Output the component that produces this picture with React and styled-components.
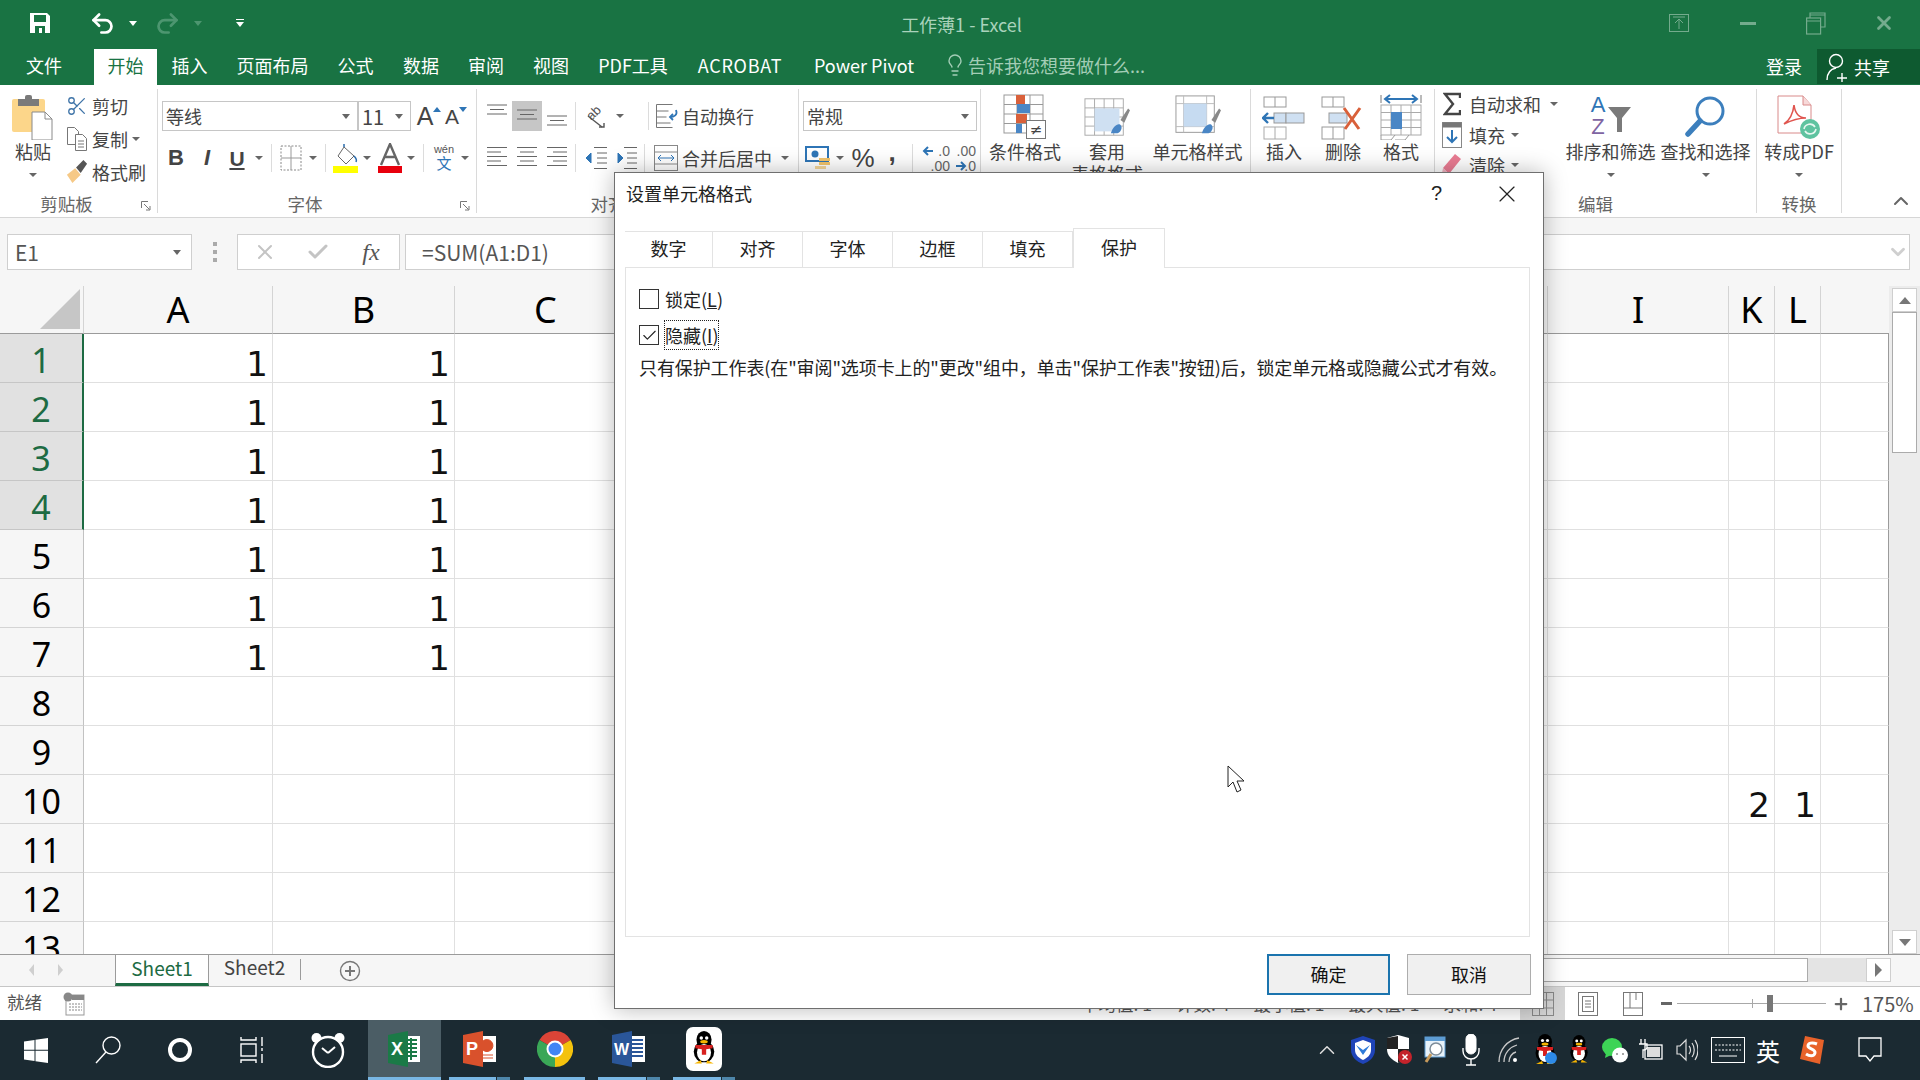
import React from "react";
import styled, { createGlobalStyle } from "styled-components";
import { Undo2, Redo2, Scissors, Lightbulb, ChevronUp, ChevronDown, Plus, X, Check } from "lucide-react";

const FONT = `"Noto Sans CJK SC", "Noto Sans", sans-serif`;

const GlobalStyle = createGlobalStyle`
  html, body { margin: 0; padding: 0; background: #fff; overflow: hidden; }
  * { box-sizing: border-box; }
  body { font-family: ${FONT}; font-size: 18px; color: #444; }
`;

const Page = styled.div`
  position: relative;
  width: 1920px;
  height: 1080px;
  display: flex;
  flex-direction: column;
  overflow: hidden;
`;

/* ---- title bar ---- */
const TitleBar = styled.div`
  height: 49px;
  background: #197343;
  display: flex;
  align-items: center;
  color: #fff;
`;
const QatSlot = styled.div`
  width: ${(p) => p.$w}px;
  height: 49px;
  display: flex;
  align-items: center;
  justify-content: center;
  padding-bottom: 3px;
`;
const TitleText = styled.div`
  flex: 1;
  text-align: center;
  color: #a9d2bb;
  font-size: 18px;
  padding-left: 3px;
  padding-bottom: 2px;
`;
const TinyCaret = styled.span`
  width: 0;
  height: 0;
  border-left: 4px solid transparent;
  border-right: 4px solid transparent;
  ${(p) =>
    p.$up
      ? `border-bottom: 5px solid ${p.$c || "#666"};`
      : `border-top: 5px solid ${p.$c || "#666"};`}
  margin-bottom: ${(p) => p.$raise || 0}px;
  display: inline-block;
`;
const QatMore = styled.div`
  display: flex;
  flex-direction: column;
  align-items: center;
  gap: 2px;
  i { width: 8px; height: 1.5px; background: #fff; display: block; }
`;

/* ---- tabs ---- */
const TabRow = styled.div`
  height: 36px;
  background: #197343;
  display: flex;
  align-items: stretch;
`;
const MenuTab = styled.div`
  width: ${(p) => p.$w}px;
  display: flex;
  align-items: center;
  justify-content: center;
  font-size: 18px;
  padding-bottom: 5px;
  padding-right: ${(p) => p.$pr || 0}px;
  letter-spacing: ${(p) => p.$ls || 0}px;
  color: ${(p) => (p.$active ? "#197343" : "#fff")};
  background: ${(p) => (p.$active ? "#fff" : "transparent")};
`;
const Hint = styled.div`
  margin-left: 13px;
  display: flex;
  align-items: center;
  gap: 1px;
  color: #a3cdb6;
  font-size: 18px;
  padding-bottom: 5px;
`;
const Login = styled.div`
  margin-left: auto;
  width: 51px;
  color: #fff;
  display: flex;
  align-items: center;
  padding-bottom: 3px;
`;
const ShareBtn = styled.div`
  width: 103px;
  height: 35px;
  background: #0e5a30;
  color: #fff;
  display: flex;
  align-items: center;
  gap: 6px;
  padding-left: 9px;
`;

/* ---- ribbon ---- */
const Ribbon = styled.div`
  height: 133px;
  background: #fff;
  border-bottom: 1px solid #d6d6d6;
  padding: 4px 0 4px;
  display: flex;
`;
const Group = styled.div`
  width: ${(p) => p.$w}px;
  border-right: 1px solid #dadada;
  display: flex;
  flex-direction: column;
  position: relative;
`;
const GroupBody = styled.div`
  flex: 1;
  display: flex;
  min-height: 0;
`;
const GroupLabel = styled.div`
  height: 19px;
  line-height: 19px;
  text-align: center;
  font-size: 17.5px;
  color: #666;
  padding-right: ${(p) => (p.$launcher ? 24 : 0)}px;
`;
const Launcher = styled.svg`
  position: absolute;
  right: 6px;
  bottom: 2px;
`;
const CollapseCell = styled.div`
  flex: 1;
  display: flex;
  justify-content: flex-end;
  align-items: flex-end;
  padding-right: 7px;
`;
const BigBtn = styled.div`
  width: ${(p) => p.$w}px;
  margin-left: ${(p) => p.$ml || 0}px;
  padding-top: 5px;
  display: flex;
  flex-direction: column;
  align-items: center;
  flex-shrink: 0;
`;
const BigIcon = styled.div`
  height: 45px;
  display: flex;
  align-items: flex-start;
  justify-content: center;
`;
const BigLabel = styled.div`
  height: 20px;
  line-height: 20px;
  margin-top: 2px;
  font-size: 18px;
  color: #444;
  white-space: nowrap;
`;
const Caret = styled.span`
  width: 0;
  height: 0;
  border-left: 4px solid transparent;
  border-right: 4px solid transparent;
  border-top: 4.5px solid #666;
  flex-shrink: 0;
  margin-top: ${(p) => p.$mt || 0}px;
`;
const ClipCol = styled.div`
  width: ${(p) => (p.$w ? p.$w + "px" : "auto")};
  padding-left: ${(p) => p.$pl || 0}px;
  display: flex;
  flex-direction: column;
  flex-shrink: 0;
`;
const SmallRow = styled.div`
  height: ${(p) => p.$h || 33}px;
  display: flex;
  align-items: center;
  gap: ${(p) => p.$gap || 4}px;
  color: #444;
  font-size: 18px;
  white-space: nowrap;
`;
const FormRows = styled.div`
  padding: 12px 0 0 ${(p) => p.$pl || 0}px;
  display: flex;
  flex-direction: column;
  gap: 12px;
`;
const FormRow = styled.div`
  height: 30px;
  display: flex;
  align-items: center;
`;
const Combo = styled.div`
  width: ${(p) => p.$w}px;
  height: 30px;
  border: 1px solid #c6c6c6;
  background: #fff;
  display: flex;
  align-items: center;
  justify-content: space-between;
  padding: 0 7px 0 3px;
  font-size: 18px;
  color: #444;
  margin-right: ${(p) => p.$mr || 0}px;
`;
const Cell = styled.div`
  width: ${(p) => p.$w}px;
  height: 30px;
  flex-shrink: 0;
  display: flex;
  align-items: center;
  justify-content: center;
  background: ${(p) => (p.$on ? "#c6c6c6" : "transparent")};
  color: #444;
`;
const Sep = styled.div`
  width: 1px;
  height: 28px;
  background: #dcdcdc;
`;
const FontGlyph = styled.span`
  font-family: "Liberation Sans", sans-serif;
  font-size: ${(p) => p.$s || 20}px;
  font-weight: ${(p) => (p.$b ? 700 : 400)};
  font-style: ${(p) => (p.$i ? "italic" : "normal")};
  text-decoration: ${(p) => (p.$u ? "underline" : "none")};
  padding-bottom: ${(p) => p.$pb || 0}px;
  color: #444;
  line-height: 1;
`;
const InlineText = styled.span`
  font-size: 18px;
  color: #444;
  white-space: nowrap;
`;
const SizeValue = styled.span`
  font-size: 20px;
`;

/* ---- formula bar ---- */
const FormulaBar = styled.div`
  height: 68px;
  background: #f6f6f6;
  padding: 16px 10px 16px 7px;
  display: flex;
`;
const NameBox = styled.div`
  width: 185px;
  border: 1px solid #cfcfcf;
  background: #fff;
  display: flex;
  align-items: center;
  justify-content: space-between;
  padding: 0 10px 0 7px;
  font-size: 21px;
  color: #555;
`;
const Dots = styled.div`
  width: 45px;
  display: flex;
  flex-direction: column;
  align-items: center;
  justify-content: center;
  gap: 4px;
  i { width: 4px; height: 4px; background: #aaa; display: block; }
`;
const FxBox = styled.div`
  width: 163px;
  border: 1px solid #cfcfcf;
  background: #fff;
  display: flex;
  align-items: center;
  padding-left: 15px;
  margin-right: 5px;
`;
const FxSlot = styled.div`
  width: ${(p) => p.$w}px;
  display: flex;
  justify-content: center;
  align-items: center;
  font-family: "Liberation Serif", serif;
  font-style: italic;
  font-size: 24px;
  color: #555;
`;
const FormulaInput = styled.div`
  flex: 1;
  border: 1px solid #cfcfcf;
  background: #fff;
  padding: 0 0 0 16px;
  display: flex;
  align-items: center;
  justify-content: space-between;
  font-size: 21px;
  color: #555;
`;

/* ---- sheet ---- */
const SheetArea = styled.div`
  height: 668px;
  display: flex;
  background: #f6f6f6;
`;
const COLS = [
  ["A", 189], ["B", 182], ["C", 182], ["D", 182], ["E", 182], ["F", 182], ["G", 182], ["H", 183],
  ["I", 181], ["K", 46], ["L", 46], ["", 68],
];
const SheetGrid = styled.div`
  width: 1889px;
  height: 668px;
  overflow: hidden;
  flex-shrink: 0;
  display: grid;
  grid-template-columns: 84px ${COLS.map((c) => c[1] + "px").join(" ")};
  grid-template-rows: 48px;
  grid-auto-rows: 49px;
`;
const Corner = styled.div`
  background: #f6f6f6;
  border-bottom: 1px solid #9b9b9b;
  border-right: 1px solid #d4d4d4;
  display: flex;
  justify-content: flex-end;
  align-items: flex-end;
  padding: 0 3px 4px 0;
  i {
    width: 40px;
    height: 40px;
    background: #c6c6c6;
    clip-path: polygon(100% 0, 100% 100%, 0 100%);
    display: block;
  }
`;
const ColHead = styled.div`
  position: relative;
  background: #f6f6f6;
  border-bottom: 1px solid #9b9b9b;
  border-right: ${(p) => (p.$last ? "none" : "1px solid #d4d4d4")};
  display: flex;
  align-items: center;
  justify-content: center;
  font-family: "Noto Sans", sans-serif;
  font-size: 36px;
  color: #000;
  line-height: 1;
  ${(p) =>
    p.$hiddenNext &&
    `&::after { content: ""; position: absolute; right: -5px; top: 0; bottom: 0; width: 1px; background: #d4d4d4; }`}
`;
const RowHead = styled.div`
  background: ${(p) => (p.$sel ? "#e1e1e1" : "#f6f6f6")};
  border-bottom: 1px solid ${(p) => (p.$sel ? "#c6c6c6" : "#d4d4d4")};
  border-right: ${(p) => (p.$sel ? "2px solid #1d6b43" : "1px solid #c2c2c2")};
  color: ${(p) => (p.$sel ? "#1d6b43" : "#000")};
  display: flex;
  align-items: center;
  justify-content: center;
  font-family: "Noto Sans", sans-serif;
  font-size: 34px;
  line-height: 1;
  padding-top: 4px;
`;
const DataCell = styled.div`
  background: #fff;
  border-bottom: 1px solid #e0e0e0;
  border-right: 1px solid ${(p) => (p.$edge ? "#9b9b9b" : "#e0e0e0")};
  display: flex;
  align-items: center;
  justify-content: flex-end;
  padding: 11px 4px 0 0;
  font-family: "DejaVu Sans", sans-serif;
  font-size: 34px;
  line-height: 1;
  color: #111;
`;
const VScroll = styled.div`
  flex: 1;
  display: flex;
  flex-direction: column;
  padding: 2px 3px 0 3px;
  background: #ececec;
`;
const ScrollBtn = styled.div`
  width: 25px;
  height: ${(p) => p.$h || 24}px;
  background: #fff;
  border: 1px solid #cfcfcf;
  display: flex;
  align-items: center;
  justify-content: center;
  flex-shrink: 0;
`;
const VThumb = styled.div`
  width: 25px;
  height: 141px;
  background: #fff;
  border: 1px solid #ababab;
`;
const Tri = styled.span`
  width: 0;
  height: 0;
  border-left: 6px solid transparent;
  border-right: 6px solid transparent;
  ${(p) => (p.$up ? "border-bottom: 7px solid #777;" : "border-top: 7px solid #777;")}
`;
const VSpacer = styled.div`
  flex: 1;
`;

/* ---- sheet tabs ---- */
const SheetTabs = styled.div`
  height: 33px;
  background: #f6f6f6;
  border-top: 1px solid #9b9b9b;
  border-bottom: 1px solid #c6c6c6;
  display: flex;
  align-items: stretch;
`;
const NavArrows = styled.div`
  width: 115px;
  display: flex;
  align-items: center;
  padding: 0 0 2px 29px;
  gap: 24px;
`;
const NavTri = styled.span`
  width: 0;
  height: 0;
  border-top: 6px solid transparent;
  border-bottom: 6px solid transparent;
  ${(p) => (p.$left ? "border-right: 5px solid #cfcfcf;" : "border-left: 5px solid #cfcfcf;")}
`;
const SheetTab = styled.div`
  width: ${(p) => p.$w}px;
  display: flex;
  align-items: center;
  justify-content: center;
  font-size: 19px;
  margin-top: -1px;
  padding-bottom: ${(p) => (p.$active ? 4 : 7)}px;
  color: ${(p) => (p.$active ? "#1d6b43" : "#444")};
  background: ${(p) => (p.$active ? "#fff" : "transparent")};
  border-bottom: ${(p) => (p.$active ? "3px solid #1d6b43" : "none")};
  border-top: ${(p) => (p.$active ? "1px solid #9b9b9b" : "none")};
  border-left: ${(p) => (p.$active ? "1px solid #9b9b9b" : "none")};
  border-right: ${(p) => (p.$active ? "1px solid #9b9b9b" : "none")};
`;
const TabDivider = styled.div`
  width: 1px;
  margin: 4px 0 6px;
  background: #9b9b9b;
`;
const AddSheet = styled.div`
  margin-left: 38px;
  display: flex;
  align-items: center;
`;
const HScroll = styled.div`
  margin: 3px 29px 4px auto;
  width: 651px;
  display: flex;
  background: #e4e4e4;
`;
const HThumb = styled.div`
  width: 568px;
  background: #fff;
  border: 1px solid #ababab;
`;
const HTrack = styled.div`
  flex: 1;
`;
const HBtn = styled.div`
  width: 25px;
  background: #fff;
  border: 1px solid #cfcfcf;
  display: flex;
  align-items: center;
  justify-content: center;
  i {
    width: 0;
    height: 0;
    border-top: 7px solid transparent;
    border-bottom: 7px solid transparent;
    border-left: 7px solid #777;
  }
`;

/* ---- status bar ---- */
const StatusBar = styled.div`
  height: 33px;
  background: #fff;
  display: flex;
  align-items: stretch;
  color: #555;
  font-size: 17.5px;
`;
const StatusText = styled.div`
  padding: 0 0 4px 7px;
  width: 63px;
  display: flex;
  align-items: center;
`;
const StatusCell = styled.div`
  display: flex;
  align-items: center;
`;
const Summary = styled.div`
  margin: 0 23px 0 auto;
  display: flex;
  align-items: center;
  gap: 24px;
  white-space: nowrap;
`;
const ViewBtn = styled.div`
  width: 45px;
  display: flex;
  align-items: center;
  justify-content: center;
  background: ${(p) => (p.$on ? "#d6d6d6" : "transparent")};
`;
const ZoomBar = styled.div`
  width: 265px;
  display: flex;
  align-items: center;
  padding-left: 6px;
`;
const Slider = styled.div`
  position: relative;
  width: 149px;
  height: 1px;
  background: #a8a8a8;
  margin: 0 6px 0 5px;
  &::before {
    content: "";
    position: absolute;
    left: 75px;
    top: -4px;
    width: 1px;
    height: 9px;
    background: #a8a8a8;
  }
  &::after {
    content: "";
    position: absolute;
    left: 90px;
    top: -8px;
    width: 6px;
    height: 17px;
    background: #777;
  }
`;
const ZoomPct = styled.div`
  margin-left: 12px;
  font-size: 20px;
  color: #555;
`;

/* ---- taskbar ---- */
const Taskbar = styled.div`
  height: 60px;
  background: #1b2a32;
  display: flex;
`;
const TaskSlot = styled.div`
  width: ${(p) => p.$w}px;
  margin-left: ${(p) => p.$ml || 0}px;
  background: ${(p) => (p.$active ? "#4b5d65" : "transparent")};
  display: flex;
  flex-direction: column;
  flex-shrink: 0;
`;
const TaskIcon = styled.div`
  flex: 1;
  display: flex;
  align-items: center;
  justify-content: center;
  color: #fff;
  font-size: 24px;
`;
const Indicator = styled.div`
  height: 3px;
  display: flex;
  gap: 1px;
  i { background: #79b7e4; flex: 1; display: block; }
  i + i { flex: 0 0 13px; background: #4e86aa; }
`;
const Tray = styled.div`
  margin-left: auto;
  display: flex;
  padding-right: 19px;
`;

/* ---- dialog ---- */
const Dialog = styled.div`
  position: absolute;
  left: 614px;
  top: 172px;
  width: 930px;
  height: 837px;
  background: #fff;
  border: 1px solid #6f6f6f;
  box-shadow: 0 0 22px rgba(0, 0, 0, 0.28);
  display: flex;
  flex-direction: column;
  color: #222;
`;
const DialogHead = styled.div`
  height: 55px;
  display: flex;
  align-items: flex-start;
  padding: 7px 22px 0 11px;
  font-size: 18px;
`;
const DialogTitle = styled.div`
  flex: 1;
`;
const HelpMark = styled.div`
  width: 20px;
  margin: 2px 42px 0 0;
  font-family: "Liberation Sans", sans-serif;
  font-size: 20px;
`;
const DlgTabs = styled.div`
  height: 39px;
  padding-left: 10px;
  display: flex;
  align-items: flex-end;
  position: relative;
  z-index: 1;
`;
const DlgTab = styled.div`
  width: ${(p) => p.$w}px;
  height: ${(p) => (p.$active ? 40 : 36)}px;
  background: #fff;
  margin-bottom: ${(p) => (p.$active ? -1 : 0)}px;
  padding-bottom: 3px;
  border-top: 1px solid #e3e3e3;
  border-right: 1px solid #e3e3e3;
  border-left: ${(p) => (p.$active ? "1px solid #e3e3e3" : "none")};
  display: flex;
  align-items: center;
  justify-content: center;
  font-size: 18px;
  color: #222;
`;
const DlgPanel = styled.div`
  height: 670px;
  margin: 0 13px 0 10px;
  border: 1px solid #e3e3e3;
  padding: 21px 13px;
  display: flex;
  flex-direction: column;
`;
const CheckRow = styled.div`
  height: 20px;
  margin-bottom: 16px;
  display: flex;
  align-items: center;
  gap: 5px;
  font-size: 18px;
  color: #222;
`;
const CheckBox = styled.span`
  width: 20px;
  height: 20px;
  border: 1px solid #333;
  display: flex;
  align-items: center;
  justify-content: center;
  flex-shrink: 0;
`;
const CheckLabel = styled.span`
  padding: 2px 0;
  border: 1px dotted ${(p) => (p.$focus ? "#222" : "transparent")};
  line-height: 24px;
`;
const Desc = styled.div`
  font-size: 18px;
  line-height: 24px;
  letter-spacing: -0.1px;
  white-space: nowrap;
  color: #222;
  margin-top: -6px;
`;
const DlgFooter = styled.div`
  padding: 17px 12px 0 0;
  display: flex;
  justify-content: flex-end;
  gap: 17px;
`;
const DlgButton = styled.div`
  width: ${(p) => (p.$primary ? 123 : 124)}px;
  height: 41px;
  background: #f0f0f0;
  border: ${(p) => (p.$primary ? "2px solid #1b74ae" : "1px solid #adadad")};
  display: flex;
  align-items: center;
  justify-content: center;
  font-size: 18px;
  color: #111;
  padding-bottom: 2px;
`;
const Cursor = styled.svg`
  position: absolute;
  left: 1227px;
  top: 765px;
`;

/* ---- icons ---- */
const SaveIcon = () => (
  <svg width="20" height="20" viewBox="0 0 20 20">
    <path d="M0 0h17l3 3v17H0z" fill="#fff" />
    <rect x="4" y="2" width="12" height="7" fill="#197343" />
    <rect x="5" y="13" width="10" height="7" fill="#197343" />
    <rect x="9" y="15" width="3" height="5" fill="#fff" />
  </svg>
);
const PasteIcon = () => (
  <svg width="42" height="46" viewBox="0 0 42 46">
    <rect x="0" y="5" width="33" height="33" rx="2" fill="#fcd68a" />
    <rect x="6" y="5" width="21" height="7" fill="#7a7a7a" />
    <rect x="13" y="1" width="7" height="7" rx="2" fill="#7a7a7a" />
    <path d="M20 18h13l7 7v21H20z" fill="#fff" stroke="#8a8a8a" />
    <path d="M33 18v7h7" fill="none" stroke="#8a8a8a" />
  </svg>
);
const CopyIcon = () => (
  <svg width="22" height="26" viewBox="0 0 22 26" fill="#fff" stroke="#777">
    <path d="M1.5 1.5h7l4 4v13h-11z" />
    <path d="M9.5 8.5h7l4 4v12h-11z" />
    <path d="M12 15h6M12 18h6M12 21h6" />
  </svg>
);
const BrushIcon = () => (
  <svg width="24" height="26" viewBox="0 0 24 26">
    <path d="M1 16l9-7 6 7-9 9z" fill="#f6c987" />
    <path d="M11 8l8-8 4 4-7 10z" fill="#555" />
  </svg>
);
const LaunchIcon = () => (
  <Launcher width="10" height="10" viewBox="0 0 10 10" fill="none" stroke="#777">
    <path d="M.5 7V.5H7" />
    <path d="M3 3l5.5 5.5M9 5v4H5" />
  </Launcher>
);
const BorderIcon = () => (
  <svg width="22" height="26" viewBox="0 0 22 26" fill="none" stroke="#888" strokeDasharray="2 1.5">
    <rect x="1" y="1" width="20" height="24" />
    <path d="M11 1v24M1 13h20" strokeDasharray="none" stroke="#999" />
  </svg>
);
const FillIcon = () => (
  <svg width="26" height="30" viewBox="0 0 26 30">
    <path d="M11 4l10 9-8 8-8-8z" fill="#fff" stroke="#666" />
    <path d="M11 4V1M21 13c2 2 3 4 2 6" fill="none" stroke="#2b6cad" strokeWidth="1.5" />
    <rect x="0" y="23" width="25" height="7" fill="#ffff00" />
  </svg>
);
const ColorAIcon = () => (
  <svg width="24" height="30" viewBox="0 0 24 30">
    <path d="M3 22L12 1l9 21M7 14h10" fill="none" stroke="#666" strokeWidth="2.4" />
    <rect x="0" y="23" width="24" height="7" fill="#e8000d" />
  </svg>
);
const WenIcon = () => (
  <svg width="26" height="30" viewBox="0 0 26 30">
    <text x="13" y="10" textAnchor="middle" fontSize="11" fill="#555" fontFamily="Liberation Sans">wén</text>
    <text x="13" y="26" textAnchor="middle" fontSize="15" fill="#2e75b6" fontFamily="Noto Sans CJK SC">文</text>
  </svg>
);
const AlignLines = ({ kind }) => {
  const ys = kind === "top" ? [4, 8.5, 13] : kind === "middle" ? [9, 13.5, 18] : [15, 19.5, 24];
  return (
    <svg width="22" height="30" viewBox="0 0 22 30" stroke="#666">
      {ys.map((y, i) => (
        <line key={y} x1={i === 1 ? 4 : 1} x2={i === 1 ? 18 : 21} y1={y} y2={y} />
      ))}
    </svg>
  );
};
const HAlign = ({ kind }) => (
  <svg width="22" height="24" viewBox="0 0 22 24" stroke="#666">
    {[1.5, 6, 10.5, 15, 19.5].map((y, i) => {
      const short = i % 2 === 1;
      const x1 = !short || kind === "left" ? 1 : kind === "center" ? 4 : 7;
      const x2 = !short || kind === "right" ? 21 : kind === "center" ? 18 : 15;
      return <line key={y} x1={x1} x2={x2} y1={y} y2={y} />;
    })}
  </svg>
);
const OrientIcon = () => (
  <svg width="24" height="26" viewBox="0 0 24 26" fill="none" stroke="#555" strokeWidth="1.4">
    <text x="3" y="15" fontSize="13" transform="rotate(-45 9 11)" fill="#555" stroke="none" fontFamily="Liberation Sans">ab</text>
    <path d="M4 13l14 11" stroke="#555" />
    <path d="M15 24h5v-4" stroke="#555" />
  </svg>
);
const IndentIcon = ({ out }) => (
  <svg width="23" height="24" viewBox="0 0 23 24" stroke="#666">
    <path d="M9 1.5h13M12 7h10M12 12h10M12 17h10M9 22.5h13" />
    <path d={out ? "M1 12l5-5v10z" : "M8 12l-5-5v10z"} fill="#2e75b6" stroke="#2e75b6" />
  </svg>
);
const WrapIcon = () => (
  <svg width="24" height="26" viewBox="0 0 24 26" fill="none" stroke="#777">
    <path d="M1.5 1.5h16M1.5 1.5v23h16M1.5 8h12M1.5 14h10M1.5 20h14" />
    <path d="M21 7c2 5-2 7-6 7" stroke="#2e75b6" strokeWidth="1.8" />
    <path d="M18 11l-3 3 3 3" stroke="#2e75b6" strokeWidth="1.8" />
  </svg>
);
const MergeIcon = () => (
  <svg width="24" height="26" viewBox="0 0 24 26" fill="none" stroke="#888">
    <rect x=".5" y=".5" width="23" height="25" />
    <path d="M.5 7h23M.5 19h23" />
    <path d="M4 13h16M7 10l-3 3 3 3M17 10l3 3-3 3" stroke="#2e75b6" />
  </svg>
);
const CurrencyIcon = () => (
  <svg width="26" height="24" viewBox="0 0 26 24">
    <rect x="1" y="1" width="22" height="14" fill="#fff" stroke="#2e75b6" strokeWidth="2" />
    <circle cx="10" cy="8" r="3.5" fill="#2e75b6" />
    <rect x="14" y="12" width="11" height="3" fill="#f2c46b" />
    <rect x="14" y="16" width="11" height="3" fill="#f2c46b" />
    <rect x="10" y="20" width="11" height="3" fill="#f6d79a" />
  </svg>
);
const GridLines = ({ x, y, w, h, nx, ny, stroke = "#999" }) => (
  <g fill="none" stroke={stroke}>
    <rect x={x} y={y} width={w} height={h} fill="#fff" />
    {Array.from({ length: nx - 1 }, (_, i) => (
      <line key={"v" + i} x1={x + (w * (i + 1)) / nx} x2={x + (w * (i + 1)) / nx} y1={y} y2={y + h} />
    ))}
    {Array.from({ length: ny - 1 }, (_, i) => (
      <line key={"h" + i} x1={x} x2={x + w} y1={y + (h * (i + 1)) / ny} y2={y + (h * (i + 1)) / ny} />
    ))}
  </g>
);
const CondIcon = () => (
  <svg width="44" height="46" viewBox="0 0 44 46">
    <GridLines x={1} y={1} w={39} h={38} nx={3} ny={4} />
    <rect x="13" y="1" width="9" height="9" fill="#d9603a" />
    <rect x="14" y="10" width="13" height="9" fill="#4a86c5" />
    <rect x="13" y="20" width="11" height="9" fill="#d9603a" />
    <rect x="13" y="30" width="6" height="9" fill="#4a86c5" />
    <rect x="23.5" y="26.5" width="19" height="18" fill="#fff" stroke="#777" />
    <text x="33" y="41" textAnchor="middle" fontSize="15" fill="#444" fontFamily="DejaVu Sans">≠</text>
  </svg>
);
const StyleBrush = () => (
  <g>
    <path d="M28 40c2-7 7-11 10-9 3 3 0 8-3 9z" fill="#4a86c5" />
    <path d="M38 26l8-12 2 2-6 13z" fill="#888" />
  </g>
);
const TableStyleIcon = () => (
  <svg width="46" height="46" viewBox="0 0 48 46">
    <GridLines x={1} y={4} w={40} h={38} nx={4} ny={4} stroke="#aaa" />
    <rect x="11" y="14" width="26" height="24" fill="#cfe0f2" />
    <StyleBrush />
  </svg>
);
const CellStyleIcon = () => (
  <svg width="46" height="46" viewBox="0 0 48 46">
    <rect x="1" y="1" width="40" height="38" fill="#fff" stroke="#999" />
    <path d="M1 9h40M1 33h40M9 1v38M33 1v38" stroke="#bbb" />
    <rect x="9" y="9" width="24" height="24" fill="#c6dbf1" />
    <StyleBrush />
  </svg>
);
const InsertIcon = () => (
  <svg width="44" height="46" viewBox="0 0 44 46">
    <GridLines x={2} y={3} w={22} h={10} nx={2} ny={1} />
    <GridLines x={2} y={33} w={22} h={12} nx={2} ny={1} stroke="#aaa" />
    <rect x="12" y="19" width="12" height="10" fill="#cfe0f2" stroke="#999" />
    <rect x="24" y="19" width="18" height="10" fill="#cfe0f2" stroke="#999" />
    <path d="M12 24H1M6 19l-5 5 5 5" fill="none" stroke="#2e75b6" strokeWidth="2.4" />
  </svg>
);
const DeleteIcon = () => (
  <svg width="44" height="46" viewBox="0 0 44 46">
    <GridLines x={1} y={3} w={22} h={10} nx={2} ny={1} />
    <GridLines x={1} y={33} w={22} h={12} nx={2} ny={1} />
    <rect x="8" y="19" width="18" height="10" fill="#cfe0f2" stroke="#999" />
    <path d="M23 14l15 21M39 14L24 35" stroke="#d9603a" strokeWidth="3" />
  </svg>
);
const FormatIcon = () => (
  <svg width="42" height="46" viewBox="0 0 42 46">
    <path d="M1 1v8M41 1v8" stroke="#777" />
    <path d="M5 5h32M10 1L5 5l5 4M32 1l5 4-5 4" fill="none" stroke="#2e75b6" strokeWidth="2" />
    <GridLines x={1} y={11} w={40} h={30} nx={4} ny={4} stroke="#aaa" />
    <rect x="11" y="18" width="11" height="17" fill="#4a86c5" />
    <path d="M1 41v5h10l4-5M15 46h10l4-5" fill="none" stroke="#999" />
  </svg>
);
const SigmaIcon = () => (
  <svg width="18" height="24" viewBox="0 0 18 24" fill="none" stroke="#444" strokeWidth="2.4">
    <path d="M17 6V2H2l8 10-8 10h15v-4" />
  </svg>
);
const FillDownIcon = () => (
  <svg width="20" height="26" viewBox="0 0 20 26">
    <rect x=".5" y=".5" width="19" height="25" fill="#fff" stroke="#888" />
    <rect x=".5" y=".5" width="19" height="5" fill="#777" />
    <path d="M10 8v12M5 15l5 5 5-5" fill="none" stroke="#2e75b6" strokeWidth="2" />
  </svg>
);
const EraserIcon = () => (
  <svg width="20" height="24" viewBox="0 0 20 24">
    <path d="M1 15L13 1l6 5L7 21z" fill="#ea7c93" />
    <path d="M1 15l6 6-3 3-4-4z" fill="#f2b4c1" />
  </svg>
);
const SortIcon = () => (
  <svg width="44" height="46" viewBox="0 0 44 46">
    <text x="9" y="18" textAnchor="middle" fontSize="22" fill="#2e75b6" fontFamily="Liberation Sans">A</text>
    <text x="9" y="40" textAnchor="middle" fontSize="22" fill="#8064a2" fontFamily="Liberation Sans">Z</text>
    <path d="M19 13h23l-9 11v14h-5V24z" fill="#7a7a7a" />
  </svg>
);
const FindIcon = () => (
  <svg width="42" height="46" viewBox="0 0 42 46" fill="none" stroke="#3c7fbd">
    <circle cx="25" cy="17" r="13" strokeWidth="3" />
    <path d="M15 27L3 40" strokeWidth="5.5" strokeLinecap="round" />
  </svg>
);
const PdfIcon = () => (
  <svg width="44" height="46" viewBox="0 0 44 46">
    <path d="M1 2h25l8 9v28H1z" fill="#fff" stroke="#d98a8a" />
    <path d="M26 2v9h8" fill="#f7d9d9" stroke="#d98a8a" />
    <path d="M7 30c6-4 9-10 10-19 1 8 5 13 12 13-7 0-14 2-22 6z" fill="none" stroke="#e0554f" strokeWidth="1.6" />
    <circle cx="33" cy="35" r="10" fill="#5ec3a0" />
    <path d="M27 35a6 6 0 0 1 11-2M39 35a6 6 0 0 1-11 2" fill="none" stroke="#e7f7f0" strokeWidth="1.6" />
  </svg>
);
const UserIcon = () => (
  <svg width="22" height="30" viewBox="0 0 22 30" fill="none" stroke="#fff" strokeWidth="1.4">
    <circle cx="10" cy="9" r="6.5" />
    <path d="M1 28c0-7 4-11 9-12" />
    <path d="M16 21v9M11 26h10" />
  </svg>
);
const MacroIcon = () => (
  <svg width="22" height="24" viewBox="0 0 22 24">
    <rect x="3" y="3" width="18" height="20" fill="#fff" stroke="#999" />
    <rect x="9" y="3" width="12" height="5" fill="#888" />
    <circle cx="5" cy="5" r="4.5" fill="#888" />
    <path d="M6 12h13M6 15h13M6 18h13" stroke="#888" strokeDasharray="2 1" />
  </svg>
);
const NormalView = () => (
  <svg width="22" height="24" viewBox="0 0 22 24" fill="none" stroke="#888">
    <rect x=".5" y=".5" width="21" height="23" />
    <path d="M.5 8h21M.5 16h21M7.5.5v23M14.5.5v23" />
  </svg>
);
const PageView = () => (
  <svg width="20" height="24" viewBox="0 0 20 24" fill="none" stroke="#777">
    <rect x=".5" y=".5" width="19" height="23" />
    <rect x="4.5" y="4.5" width="11" height="15" />
    <path d="M7 9h6M7 12h6M7 15h6" />
  </svg>
);
const BreakView = () => (
  <svg width="20" height="24" viewBox="0 0 20 24" fill="none" stroke="#777">
    <rect x=".5" y=".5" width="19" height="23" />
    <path d="M.5 16h19M7 .5V16M13 .5V8" />
  </svg>
);

const WinLogo = () => (
  <svg width="24" height="25" viewBox="0 0 24 25" fill="#fff">
    <path d="M0 3.5L10.5 2v9.8H0zM11.5 1.8L24 0v11.8H11.5zM0 12.8h10.5V23L0 21.5zM11.5 12.8H24V25l-12.5-1.8z" />
  </svg>
);
const SearchIcon = () => (
  <svg width="26" height="28" viewBox="0 0 26 28" fill="none" stroke="#fff" strokeWidth="1.4">
    <circle cx="16.5" cy="9.5" r="8.5" />
    <path d="M11 16L1 27" />
  </svg>
);
const TaskViewIcon = () => (
  <svg width="24" height="26" viewBox="0 0 24 26" fill="none" stroke="#fff" strokeWidth="1.4">
    <rect x="1" y="7" width="15" height="12" />
    <path d="M1 0v3h15V0M1 26v-3h15v3M22 0v9M22 11v3M22 17v9" />
  </svg>
);
const ClockIcon = () => (
  <svg width="36" height="36" viewBox="0 0 36 36" fill="none">
    <circle cx="6.5" cy="6" r="5" fill="#fff" />
    <circle cx="29.5" cy="6" r="5" fill="#fff" />
    <circle cx="18" cy="20" r="15" fill="#1b2a32" stroke="#fff" strokeWidth="2.4" />
    <path d="M18 21l-6-5M18 21l7-6" stroke="#fff" strokeWidth="2" />
  </svg>
);
const ExcelIcon = () => (
  <svg width="34" height="36" viewBox="0 0 34 36">
    <rect x="14" y="5" width="18" height="26" fill="#fff" />
    <path d="M17 9h12M17 13h12M17 17h12M17 21h12M17 25h12M23 7v22" stroke="#1b7a47" strokeWidth="2" />
    <path d="M0 4l20-4v36L0 32z" fill="#1b7a47" />
    <text x="9" y="24" textAnchor="middle" fontSize="18" fontWeight="700" fill="#fff" fontFamily="Liberation Sans">X</text>
  </svg>
);
const PptIcon = () => (
  <svg width="34" height="36" viewBox="0 0 34 36">
    <rect x="14" y="5" width="19" height="26" fill="#fff" />
    <path d="M20 10a6 6 0 1 1-1 8zM18 24h12M18 27h12" fill="#d9512c" stroke="#d9512c" />
    <path d="M0 4l20-4v36L0 32z" fill="#d9512c" />
    <text x="9" y="24" textAnchor="middle" fontSize="18" fontWeight="700" fill="#fff" fontFamily="Liberation Sans">P</text>
  </svg>
);
const WordIcon = () => (
  <svg width="34" height="36" viewBox="0 0 34 36">
    <rect x="14" y="5" width="19" height="26" fill="#fff" />
    <path d="M18 9h13M18 13h13M18 17h13M18 21h13M18 25h13" stroke="#2a5699" strokeWidth="2" />
    <path d="M0 4l20-4v36L0 32z" fill="#2a5699" />
    <text x="9.5" y="24" textAnchor="middle" fontSize="16" fontWeight="700" fill="#fff" fontFamily="Liberation Sans">W</text>
  </svg>
);
const ChromeIcon = () => (
  <svg width="36" height="36" viewBox="0 0 36 36">
    <path d="M18 18L2.4 9A18 18 0 0 1 33.6 9z" fill="#db4437" />
    <path d="M18 18L33.6 9A18 18 0 0 1 18 36z" fill="#f4c20d" />
    <path d="M18 18L18 36A18 18 0 0 1 2.4 9z" fill="#3aa757" />
    <circle cx="18" cy="18" r="8.5" fill="#fff" />
    <circle cx="18" cy="18" r="6.5" fill="#4285f4" />
  </svg>
);
const Penguin = ({ s = 24, scarf = "#d8201f", badge }) => (
  <svg width={s} height={s * 1.33} viewBox="0 0 24 32">
    <ellipse cx="12" cy="8" rx="7" ry="8" fill="#000" />
    <ellipse cx="12" cy="19" rx="9.5" ry="10" fill="#000" />
    <ellipse cx="12" cy="20" rx="6.5" ry="8" fill="#fff" />
    <circle cx="9.5" cy="6.5" r="1.6" fill="#fff" />
    <circle cx="14.5" cy="6.5" r="1.6" fill="#fff" />
    <ellipse cx="12" cy="10" rx="3.5" ry="1.6" fill="#f7b500" />
    <path d="M4 13h16v3l-6 1v5h-4v-5l-6-1z" fill={scarf} />
    <path d="M3 30l6-3 1 3zM21 30l-6-3-1 3z" fill="#f7b500" />
    {badge && <circle cx="18" cy="24" r="6" fill="#2d8ae8" />}
  </svg>
);
const QQTile = styled.div`
  width: 36px;
  height: 44px;
  background: #fff;
  border-radius: 7px;
  display: flex;
  align-items: center;
  justify-content: center;
`;
const ShieldBlue = () => (
  <svg width="24" height="28" viewBox="0 0 24 28">
    <path d="M12 0l12 4v10c0 7-6 12-12 14C6 26 0 21 0 14V4z" fill="#1f44b8" />
    <path d="M12 4l8 3v7c0 5-4 8-8 10-4-2-8-5-8-10V7z" fill="#fff" />
    <path d="M5 9l7 10 7-10-7 5z" fill="#2f7bd9" />
  </svg>
);
const ShieldRed = () => (
  <svg width="26" height="30" viewBox="0 0 26 30">
    <path d="M12 0l11 3v11c0 7-6 11-11 14C6 25 1 21 1 14V3z" fill="#fff" />
    <path d="M12 1v13H1V3zM12 14h11c0 7-6 11-11 14z" fill="#222" />
    <circle cx="19" cy="22" r="7" fill="#c4232b" />
    <path d="M16.5 19.5l5 5M21.5 19.5l-5 5" stroke="#fff" strokeWidth="1.5" />
  </svg>
);
const MagWin = () => (
  <svg width="22" height="28" viewBox="0 0 22 28">
    <rect x="1" y="1" width="20" height="20" fill="#e8f2fa" stroke="#5d9cd3" />
    <rect x="1" y="1" width="20" height="4" fill="#5d9cd3" />
    <circle cx="12" cy="13" r="6" fill="#fff" stroke="#7d8c99" strokeWidth="1.5" />
    <path d="M7 18l-5 8" stroke="#c79a5b" strokeWidth="3" />
  </svg>
);
const MicIcon = () => (
  <svg width="18" height="32" viewBox="0 0 18 32" fill="none" stroke="#fff">
    <rect x="4" y="0" width="10" height="20" rx="5" fill="#fff" />
    <path d="M1 14v3a8 8 0 0 0 16 0v-3M9 25v6M4 31h10" strokeWidth="1.4" />
  </svg>
);
const WifiIcon = () => (
  <svg width="22" height="26" viewBox="0 0 22 26" fill="none" stroke="#c8c8c8" strokeWidth="1.3">
    <path d="M1 25C1 13 9 3 21 1M6 25c0-9 6-15 13-17M11 25c0-5 3-9 7-10" />
    <circle cx="17" cy="23" r="2" fill="#fff" stroke="none" />
  </svg>
);
const WeChatIcon = () => (
  <svg width="26" height="26" viewBox="0 0 26 26">
    <ellipse cx="10" cy="10" rx="10" ry="9" fill="#3dd456" />
    <path d="M4 16l-1 5 6-3z" fill="#3dd456" />
    <ellipse cx="18" cy="18" rx="8" ry="7.5" fill="#fff" />
    <circle cx="15" cy="17" r="1" fill="#888" />
    <circle cx="21" cy="17" r="1" fill="#888" />
  </svg>
);
const PowerIcon = () => (
  <svg width="24" height="22" viewBox="0 0 24 22" fill="none" stroke="#fff" strokeWidth="1.3">
    <rect x="6" y="6" width="17" height="14" />
    <rect x="8" y="8" width="13" height="10" fill="#ddd" stroke="none" />
    <path d="M2 0v5M6 0v5M0 5h8v3c0 2-2 3-4 3v8" />
  </svg>
);
const VolumeIcon = () => (
  <svg width="22" height="24" viewBox="0 0 22 24" fill="none" stroke="#ddd" strokeWidth="1.2">
    <path d="M1 8h3l6-6v20l-6-6H1z" />
    <path d="M13 8c2 2 2 6 0 8M16 5c3 4 3 10 0 14M19 2c4 6 4 14 0 20" />
  </svg>
);
const KeyboardIcon = () => (
  <svg width="34" height="26" viewBox="0 0 34 26" fill="none" stroke="#fff">
    <rect x=".5" y=".5" width="33" height="25" />
    <path d="M4 8h26M4 13h26" strokeDasharray="2 1.5" />
    <path d="M8 19h18" />
  </svg>
);
const SogouIcon = () => (
  <svg width="26" height="30" viewBox="0 0 26 30">
    <path d="M6 1l19 4-4 24-20-5z" fill="#e8622a" />
    <path d="M18 9c-5-2-9-1-9 2s8 3 7 7-6 3-9 1" fill="none" stroke="#fff" strokeWidth="3" />
  </svg>
);
const NotifyIcon = () => (
  <svg width="24" height="26" viewBox="0 0 24 26" fill="none" stroke="#fff" strokeWidth="1.3">
    <path d="M1 1h22v18h-7l-4 5-4-5H1z" />
  </svg>
);

/* ---- data ---- */
const MENU = [
  ["文件", 94, false, 6], ["开始", 63, true], ["插入", 65], ["页面布局", 101], ["公式", 65], ["数据", 66],
  ["审阅", 64], ["视图", 66], ["PDF工具", 98], ["ACROBAT", 116, false, 0, 0.7], ["Power Pivot", 132],
];
const DIALOG_TABS = [["数字", 88], ["对齐", 90], ["字体", 90], ["边框", 90], ["填充", 90], ["保护", 92, true]];
const TRAY = [
  [36, <ChevronUp key="c" size={26} strokeWidth={1.4} color="#ddd" />],
  [36, <ShieldBlue key="s" />],
  [36, <ShieldRed key="r" />],
  [36, <MagWin key="m" />],
  [36, <MicIcon key="mic" />],
  [40, <WifiIcon key="w" />],
  [32, <Penguin key="q1" s={24} badge />],
  [36, <Penguin key="q2" s={22} />],
  [36, <WeChatIcon key="wc" />],
  [36, <PowerIcon key="p" />],
  [36, <VolumeIcon key="v" />],
  [46, <KeyboardIcon key="k" />],
  [34, "英"],
  [54, <SogouIcon key="sg" />],
  [62, <NotifyIcon key="n" />],
];

const rows = Array.from({ length: 13 }, (_, i) => i + 1);

function valueFor(row, colIndex) {
  if (row <= 7 && colIndex <= 1) return 1;
  if (row === 10 && colIndex === 9) return 2;
  if (row === 10 && colIndex === 10) return 1;
  return "";
}

export default function App() {
  return (
    <Page>
      <GlobalStyle />
      <TitleBar>
        <QatSlot $w={80}><SaveIcon /></QatSlot>
        <QatSlot $w={44}><Undo2 size={27} color="#fff" strokeWidth={2.4} /></QatSlot>
        <QatSlot $w={18}><TinyCaret $c="#fff" /></QatSlot>
        <QatSlot $w={50}><Redo2 size={27} color="#4d9670" strokeWidth={2.4} /></QatSlot>
        <QatSlot $w={12}><TinyCaret $c="#4d9670" /></QatSlot>
        <QatSlot $w={72}><QatMore><i /><TinyCaret $c="#fff" /></QatMore></QatSlot>
        <TitleText>工作薄1 - Excel</TitleText>
        <QatSlot $w={70}>
          <svg width="20" height="18" viewBox="0 0 20 18" fill="none" stroke="#74ab8d">
            <rect x=".5" y=".5" width="19" height="17" />
            <path d="M10 15V5M6 9l4-4 4 4M4 3h12" />
          </svg>
        </QatSlot>
        <QatSlot $w={68}><svg width="16" height="3"><rect width="16" height="3" fill="#74ab8d" /></svg></QatSlot>
        <QatSlot $w={68}>
          <svg width="20" height="24" viewBox="0 0 20 24" fill="none" stroke="#74ab8d" strokeWidth="1.2">
            <rect x=".6" y="7" width="14" height="16" />
            <path d="M4 7V2h15v14h-4M.6 10h14M4 4h15" />
          </svg>
        </QatSlot>
        <QatSlot $w={68}><X size={22} color="#74ab8d" strokeWidth={3} /></QatSlot>
        <QatSlot $w={2} />
      </TitleBar>

      <TabRow>
        {MENU.map(([label, w, active, pr, ls]) => (
          <MenuTab key={label} $w={w} $active={active} $pr={pr} $ls={ls}>{label}</MenuTab>
        ))}
        <Hint>
          <Lightbulb size={24} color="#a3cdb6" strokeWidth={1.4} />
          告诉我您想要做什么...
        </Hint>
        <Login>登录</Login>
        <ShareBtn><UserIcon />共享</ShareBtn>
      </TabRow>

      <Ribbon>
        <Group $w={158}>
          <GroupBody>
            <BigBtn $w={66}>
              <BigIcon><PasteIcon /></BigIcon>
              <BigLabel>粘贴</BigLabel>
              <Caret $mt={12} />
            </BigBtn>
            <ClipCol>
              <SmallRow><Cell $w={22}><Scissors size={22} color="#3f74a8" strokeWidth={1.4} /></Cell>剪切</SmallRow>
              <SmallRow><Cell $w={22}><CopyIcon /></Cell>复制<Caret /></SmallRow>
              <SmallRow><Cell $w={22}><BrushIcon /></Cell>格式刷</SmallRow>
            </ClipCol>
          </GroupBody>
          <GroupLabel $launcher>剪贴板</GroupLabel>
          <LaunchIcon />
        </Group>

        <Group $w={319}>
          <GroupBody>
            <FormRows $pl={4}>
              <FormRow>
                <Combo $w={196}>等线<TinyCaret /></Combo>
                <Combo $w={53} $mr={4}><SizeValue>11</SizeValue><TinyCaret /></Combo>
                <Cell $w={28}><FontGlyph $s={25}>A</FontGlyph><TinyCaret $up $c="#2e75b6" $raise={14} /></Cell>
                <Cell $w={26}><FontGlyph $s={21}>A</FontGlyph><TinyCaret $c="#2e75b6" $raise={14} /></Cell>
              </FormRow>
              <FormRow>
                <Cell $w={28}><FontGlyph $b $s={22}>B</FontGlyph></Cell>
                <Cell $w={34}><FontGlyph $i $b $s={22}>I</FontGlyph></Cell>
                <Cell $w={26}><FontGlyph $u $b $s={21}>U</FontGlyph></Cell>
                <Cell $w={18}><Caret /></Cell>
                <Cell $w={6}><Sep /></Cell>
                <Cell $w={34}><BorderIcon /></Cell>
                <Cell $w={10}><Caret /></Cell>
                <Cell $w={14}><Sep /></Cell>
                <Cell $w={28}><FillIcon /></Cell>
                <Cell $w={14}><Caret /></Cell>
                <Cell $w={32}><ColorAIcon /></Cell>
                <Cell $w={10}><Caret /></Cell>
                <Cell $w={14}><Sep /></Cell>
                <Cell $w={28}><WenIcon /></Cell>
                <Cell $w={14}><Caret /></Cell>
              </FormRow>
            </FormRows>
          </GroupBody>
          <GroupLabel $launcher>字体</GroupLabel>
          <LaunchIcon />
        </Group>

        <Group $w={322}>
          <GroupBody>
            <FormRows $pl={5}>
              <FormRow>
                <Cell $w={30}><AlignLines kind="top" /></Cell>
                <Cell $w={30} $on><AlignLines kind="middle" /></Cell>
                <Cell $w={30}><AlignLines kind="bottom" /></Cell>
                <Cell $w={6}><Sep /></Cell>
                <Cell $w={36}><OrientIcon /></Cell>
                <Cell $w={12}><Caret /></Cell>
                <Cell $w={18} />
                <Cell $w={8}><Sep /></Cell>
                <Cell $w={30}><WrapIcon /></Cell>
                <InlineText>自动换行</InlineText>
              </FormRow>
              <FormRow>
                <Cell $w={30}><HAlign kind="left" /></Cell>
                <Cell $w={30}><HAlign kind="center" /></Cell>
                <Cell $w={30}><HAlign kind="right" /></Cell>
                <Cell $w={6}><Sep /></Cell>
                <Cell $w={36}><IndentIcon out /></Cell>
                <Cell $w={24}><IndentIcon /></Cell>
                <Cell $w={12}><Sep /></Cell>
                <Cell $w={32}><MergeIcon /></Cell>
                <InlineText>合并后居中</InlineText>
                <Cell $w={26}><Caret /></Cell>
              </FormRow>
            </FormRows>
          </GroupBody>
          <GroupLabel $launcher>对齐方式</GroupLabel>
          <LaunchIcon />
        </Group>

        <Group $w={182}>
          <GroupBody>
            <FormRows $pl={4}>
              <FormRow>
                <Combo $w={174}>常规<TinyCaret /></Combo>
              </FormRow>
              <FormRow>
                <Cell $w={30}><CurrencyIcon /></Cell>
                <Cell $w={14}><Caret /></Cell>
                <Cell $w={32}><FontGlyph $s={26}>%</FontGlyph></Cell>
                <Cell $w={26}><FontGlyph $b $s={26} $pb={12}>,</FontGlyph></Cell>
                <Cell $w={14}><Sep /></Cell>
                <Cell $w={32}>
                  <svg width="32" height="30" viewBox="0 0 32 30">
                    <text x="31" y="13" textAnchor="end" fontSize="14" fill="#666" fontFamily="Liberation Sans">.0</text>
                    <path d="M14 8H6M9 4L5 8l4 4" fill="none" stroke="#2e75b6" strokeWidth="2" />
                    <text x="31" y="28" textAnchor="end" fontSize="14" fill="#666" fontFamily="Liberation Sans">.00</text>
                  </svg>
                </Cell>
                <Cell $w={26}>
                  <svg width="26" height="30" viewBox="0 0 26 30">
                    <text x="25" y="13" textAnchor="end" fontSize="14" fill="#666" fontFamily="Liberation Sans">.00</text>
                    <path d="M5 23h8M10 19l4 4-4 4" fill="none" stroke="#2e75b6" strokeWidth="2" />
                    <text x="25" y="28" textAnchor="end" fontSize="14" fill="#666" fontFamily="Liberation Sans">.0</text>
                  </svg>
                </Cell>
              </FormRow>
            </FormRows>
          </GroupBody>
          <GroupLabel $launcher>数字</GroupLabel>
          <LaunchIcon />
        </Group>

        <Group $w={270}>
          <GroupBody>
            <BigBtn $w={88}><BigIcon><CondIcon /></BigIcon><BigLabel>条件格式</BigLabel></BigBtn>
            <BigBtn $w={76}>
              <BigIcon><TableStyleIcon /></BigIcon>
              <BigLabel>套用</BigLabel>
              <BigLabel>表格格式</BigLabel>
            </BigBtn>
            <BigBtn $w={105}><BigIcon><CellStyleIcon /></BigIcon><BigLabel>单元格样式</BigLabel></BigBtn>
          </GroupBody>
          <GroupLabel>样式</GroupLabel>
        </Group>

        <Group $w={184}>
          <GroupBody>
            <BigBtn $w={66}><BigIcon><InsertIcon /></BigIcon><BigLabel>插入</BigLabel></BigBtn>
            <BigBtn $w={52}><BigIcon><DeleteIcon /></BigIcon><BigLabel>删除</BigLabel></BigBtn>
            <BigBtn $w={64}><BigIcon><FormatIcon /></BigIcon><BigLabel>格式</BigLabel></BigBtn>
          </GroupBody>
          <GroupLabel>单元格</GroupLabel>
        </Group>

        <Group $w={322}>
          <GroupBody>
            <ClipCol $w={126} $pl={6}>
              <SmallRow $h={30.5} $gap={6}>
                <Cell $w={22}><SigmaIcon /></Cell>自动求和<Cell $w={14}><Caret /></Cell>
              </SmallRow>
              <SmallRow $h={30.5} $gap={6}>
                <Cell $w={22}><FillDownIcon /></Cell>填充<Caret />
              </SmallRow>
              <SmallRow $h={30.5} $gap={6}>
                <Cell $w={22}><EraserIcon /></Cell>清除<Caret />
              </SmallRow>
            </ClipCol>
            <BigBtn $w={95} $ml={2}>
              <BigIcon><SortIcon /></BigIcon><BigLabel>排序和筛选</BigLabel><Caret $mt={12} />
            </BigBtn>
            <BigBtn $w={95}>
              <BigIcon><FindIcon /></BigIcon><BigLabel>查找和选择</BigLabel><Caret $mt={12} />
            </BigBtn>
          </GroupBody>
          <GroupLabel>编辑</GroupLabel>
        </Group>

        <Group $w={85}>
          <GroupBody>
            <BigBtn $w={84}>
              <BigIcon><PdfIcon /></BigIcon><BigLabel>转成PDF</BigLabel><Caret $mt={12} />
            </BigBtn>
          </GroupBody>
          <GroupLabel>转换</GroupLabel>
        </Group>

        <CollapseCell><ChevronUp size={24} color="#666" strokeWidth={2} /></CollapseCell>
      </Ribbon>

      <FormulaBar>
        <NameBox>E1<TinyCaret /></NameBox>
        <Dots><i /><i /><i /></Dots>
        <FxBox>
          <FxSlot $w={24}><X size={24} color="#c4c4c4" strokeWidth={2} /></FxSlot>
          <FxSlot $w={82}><Check size={24} color="#c4c4c4" strokeWidth={3} /></FxSlot>
          <FxSlot $w={24}>fx</FxSlot>
        </FxBox>
        <FormulaInput>=SUM(A1:D1)<ChevronDown size={22} color="#cfcfcf" strokeWidth={3} /></FormulaInput>
      </FormulaBar>

      <SheetArea>
        <SheetGrid>
          <Corner><i /></Corner>
          {COLS.map(([name], i) => (
            <ColHead key={i} $hiddenNext={name === "I"} $last={!name}>{name}</ColHead>
          ))}
          {rows.map((r) => (
            <React.Fragment key={r}>
              <RowHead $sel={r <= 4}>{r}</RowHead>
              {COLS.map((c, i) => (
                <DataCell key={i} $edge={i === COLS.length - 1}>{valueFor(r, i)}</DataCell>
              ))}
            </React.Fragment>
          ))}
        </SheetGrid>
        <VScroll>
          <ScrollBtn><Tri $up /></ScrollBtn>
          <VThumb />
          <VSpacer />
          <ScrollBtn $h={24}><Tri /></ScrollBtn>
        </VScroll>
      </SheetArea>

      <SheetTabs>
        <NavArrows>
          <NavTri $left />
          <NavTri />
        </NavArrows>
        <SheetTab $w={94} $active>Sheet1</SheetTab>
        <SheetTab $w={91}>Sheet2</SheetTab>
        <TabDivider />
        <AddSheet>
          <svg width="22" height="22" viewBox="0 0 22 22" fill="none" stroke="#777" strokeWidth="1.4">
            <circle cx="11" cy="11" r="9.5" />
            <path d="M11 6v10M6 11h10" strokeWidth="2" />
          </svg>
        </AddSheet>
        <HScroll>
          <HThumb />
          <HTrack />
          <HBtn><i /></HBtn>
        </HScroll>
      </SheetTabs>

      <StatusBar>
        <StatusText>就绪</StatusText>
        <StatusCell><MacroIcon /></StatusCell>
        <Summary>
          <span>平均值: 1</span>
          <span>计数: 4</span>
          <span>最小值: 1</span>
          <span>最大值: 1</span>
          <span>求和: 4</span>
        </Summary>
        <ViewBtn $on><NormalView /></ViewBtn>
        <ViewBtn><PageView /></ViewBtn>
        <ViewBtn><BreakView /></ViewBtn>
        <ZoomBar>
          <svg width="11" height="3"><rect width="11" height="3" fill="#666" /></svg>
          <Slider />
          <Plus size={18} color="#666" strokeWidth={3} />
          <ZoomPct>175%</ZoomPct>
        </ZoomBar>
      </StatusBar>

      <Taskbar>
        <TaskSlot $w={72}><TaskIcon><WinLogo /></TaskIcon></TaskSlot>
        <TaskSlot $w={72}><TaskIcon><SearchIcon /></TaskIcon></TaskSlot>
        <TaskSlot $w={72}>
          <TaskIcon>
            <svg width="24" height="24" viewBox="0 0 24 24" fill="none" stroke="#fff" strokeWidth="4">
              <circle cx="12" cy="12" r="10" />
            </svg>
          </TaskIcon>
        </TaskSlot>
        <TaskSlot $w={72}><TaskIcon><TaskViewIcon /></TaskIcon></TaskSlot>
        <TaskSlot $w={80}><TaskIcon><ClockIcon /></TaskIcon></TaskSlot>
        <TaskSlot $w={73} $active><TaskIcon><ExcelIcon /></TaskIcon><Indicator><i /></Indicator></TaskSlot>
        <TaskSlot $w={61} $ml={8}><TaskIcon><PptIcon /></TaskIcon><Indicator><i /><i /></Indicator></TaskSlot>
        <TaskSlot $w={61} $ml={14}><TaskIcon><ChromeIcon /></TaskIcon><Indicator><i /></Indicator></TaskSlot>
        <TaskSlot $w={62} $ml={13}><TaskIcon><WordIcon /></TaskIcon><Indicator><i /><i /></Indicator></TaskSlot>
        <TaskSlot $w={62} $ml={13}>
          <TaskIcon><QQTile><Penguin s={26} /></QQTile></TaskIcon>
          <Indicator><i /><i /></Indicator>
        </TaskSlot>
        <Tray>
          {TRAY.map(([w, node], i) => (
            <TaskSlot key={i} $w={w}><TaskIcon>{node}</TaskIcon></TaskSlot>
          ))}
        </Tray>
      </Taskbar>

      <Dialog>
        <DialogHead>
          <DialogTitle>设置单元格格式</DialogTitle>
          <HelpMark>?</HelpMark>
          <X size={28} color="#222" strokeWidth={1} />
        </DialogHead>
        <DlgTabs>
          {DIALOG_TABS.map(([label, w, active]) => (
            <DlgTab key={label} $w={w} $active={active}>{label}</DlgTab>
          ))}
        </DlgTabs>
        <DlgPanel>
          <CheckRow>
            <CheckBox />
            <CheckLabel>锁定(<u>L</u>)</CheckLabel>
          </CheckRow>
          <CheckRow>
            <CheckBox><Check size={17} color="#222" strokeWidth={1.6} /></CheckBox>
            <CheckLabel $focus>隐藏(<u>I</u>)</CheckLabel>
          </CheckRow>
          <Desc>只有保护工作表(在"审阅"选项卡上的"更改"组中，单击"保护工作表"按钮)后，锁定单元格或隐藏公式才有效。</Desc>
        </DlgPanel>
        <DlgFooter>
          <DlgButton $primary>确定</DlgButton>
          <DlgButton>取消</DlgButton>
        </DlgFooter>
      </Dialog>

      <Cursor width="19" height="28" viewBox="0 0 19 28">
        <path d="M1 1v21l5-5 4 10 4-2-4-9h7z" fill="#fff" stroke="#222" strokeWidth="1" />
      </Cursor>
    </Page>
  );
}
